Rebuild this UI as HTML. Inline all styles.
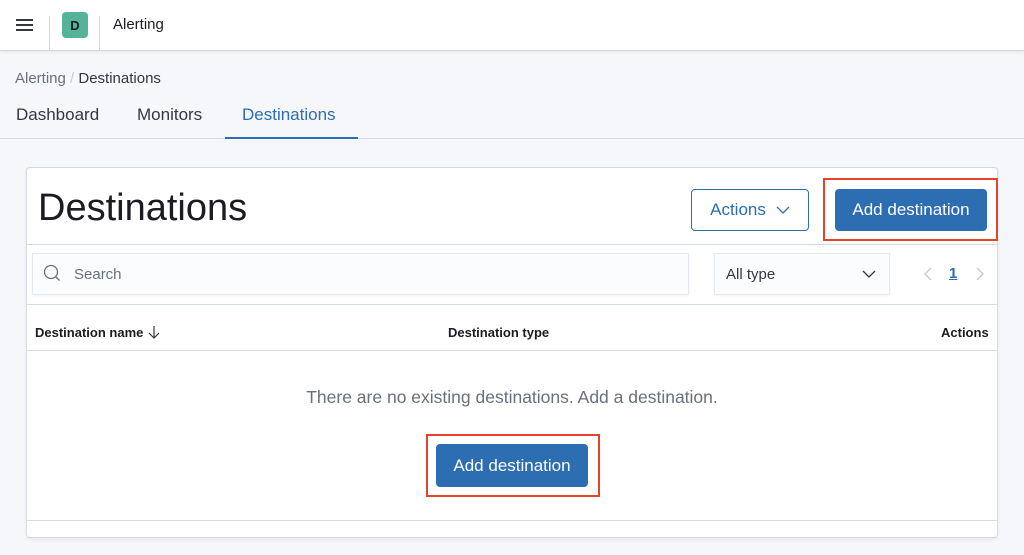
<!DOCTYPE html>
<html><head><meta charset="utf-8"><style>
*{box-sizing:border-box;margin:0;padding:0}
body{width:1024px;height:555px;background:#f5f7fa;font-family:"Liberation Sans",Arial,sans-serif;color:#343741;position:relative;overflow:hidden}
.a{position:absolute}
.btn{background:#2d6db2;color:#fff;border-radius:4px;font-size:17px;display:flex;align-items:center;justify-content:center}
.red{border:2px solid #e5432c}
</style></head><body>
<div class="a" style="left:0;top:0;width:1024px;height:51px;background:#fff;border-bottom:1px solid #d3dae6;box-shadow:0 1px 3px rgba(0,0,0,.08)"></div>
<div class="a" style="left:16px;top:19px;width:17px;height:2px;background:#343741;box-shadow:0 5px 0 #343741,0 10px 0 #343741"></div>
<div class="a" style="left:49px;top:16px;width:1px;height:35px;background:#d3dae6"></div>
<div class="a" style="left:62px;top:12px;width:26px;height:26px;background:#54b399;border-radius:4px;font-size:13px;font-weight:bold;color:#1a1c21;display:flex;align-items:center;justify-content:center">D</div>
<div class="a" style="left:99px;top:16px;width:1px;height:35px;background:#d3dae6"></div>
<div class="a" style="left:113px;top:16px;font-size:15px;color:#1a1c21">Alerting</div>
<div class="a" style="left:15px;top:70px;font-size:15px;color:#69707d">Alerting <span style="color:#c5cad3">/</span> <span style="color:#343741">Destinations</span></div>
<div class="a" style="left:16px;top:105px;font-size:17px">Dashboard</div>
<div class="a" style="left:137px;top:105px;font-size:17px">Monitors</div>
<div class="a" style="left:242px;top:105px;font-size:17px;color:#2d6db2">Destinations</div>
<div class="a" style="left:0;top:138px;width:1024px;height:1px;background:#d3dae6"></div>
<div class="a" style="left:225px;top:137px;width:133px;height:2px;background:#2d6db2"></div>
<div class="a" style="left:26px;top:167px;width:972px;height:371px;background:#fff;border:1px solid #d3dae6;border-radius:4px;box-shadow:0 2px 3px rgba(0,0,0,.06)"></div>
<div class="a" style="left:38px;top:187px;font-size:38px;color:#1a1c21">Destinations</div>
<div class="a" style="left:691px;top:189px;width:118px;height:42px;border:1px solid #2d6db2;border-radius:4px;color:#2d6db2;font-size:17px;display:flex;align-items:center;justify-content:center">Actions <svg width="14" height="8" style="margin-left:10px" viewBox="0 0 14 8"><path d="M1 1l6 6 6-6" stroke="#2d6db2" stroke-width="1.3" fill="none"/></svg></div>
<div class="a red" style="left:823px;top:178px;width:175px;height:63px"></div>
<div class="a btn" style="left:835px;top:189px;width:152px;height:42px">Add destination</div>
<div class="a" style="left:27px;top:244px;width:970px;height:1px;background:#d3dae6"></div>
<div class="a" style="left:32px;top:253px;width:657px;height:42px;background:#fbfcfd;border:1px solid #e4e8ef;box-shadow:0 1px 2px rgba(0,0,0,.05)"></div>
<svg class="a" style="left:43px;top:264px" width="18" height="18" viewBox="0 0 18 18"><circle cx="8" cy="8" r="6.5" stroke="#69707d" stroke-width="1.3" fill="none"/><path d="M12.5 12.5l4 4" stroke="#69707d" stroke-width="1.3"/></svg>
<div class="a" style="left:74px;top:266px;font-size:15px;color:#69707d">Search</div>
<div class="a" style="left:714px;top:253px;width:176px;height:42px;background:#fbfcfd;border:1px solid #e4e8ef;box-shadow:0 1px 2px rgba(0,0,0,.05)"></div>
<div class="a" style="left:726px;top:266px;font-size:15px">All type</div>
<svg class="a" style="left:862px;top:270px" width="14" height="8" viewBox="0 0 14 8"><path d="M1 1l6 6 6-6" stroke="#343741" stroke-width="1.3" fill="none"/></svg>
<svg class="a" style="left:924px;top:267px" width="8" height="14" viewBox="0 0 8 14"><path d="M7 1L1 7l6 6" stroke="#c5cad3" stroke-width="1.3" fill="none"/></svg>
<div class="a" style="left:949px;top:265px;font-size:15px;font-weight:bold;color:#2d6db2;text-decoration:underline">1</div>
<svg class="a" style="left:976px;top:267px" width="8" height="14" viewBox="0 0 8 14"><path d="M1 1l6 6-6 6" stroke="#c5cad3" stroke-width="1.3" fill="none"/></svg>
<div class="a" style="left:27px;top:304px;width:970px;height:1px;background:#d3dae6"></div>
<div class="a" style="left:35px;top:325px;font-size:13px;font-weight:bold;color:#1a1c21">Destination name</div>
<svg class="a" style="left:148px;top:325px" width="12" height="14" viewBox="0 0 12 14"><path d="M6 1v12M1 8l5 5 5-5" stroke="#343741" stroke-width="1.2" fill="none"/></svg>
<div class="a" style="left:448px;top:325px;font-size:13px;font-weight:bold;color:#1a1c21">Destination type</div>
<div class="a" style="left:941px;top:325px;font-size:13px;font-weight:bold;color:#1a1c21">Actions</div>
<div class="a" style="left:27px;top:350px;width:970px;height:1px;background:#d3dae6"></div>
<div class="a" style="left:0;top:387px;width:1024px;text-align:center;font-size:17.5px;color:#69707d">There are no existing destinations. Add a destination.</div>
<div class="a red" style="left:426px;top:434px;width:174px;height:63px"></div>
<div class="a btn" style="left:436px;top:444px;width:152px;height:43px">Add destination</div>
<div class="a" style="left:27px;top:520px;width:970px;height:1px;background:#d3dae6"></div>
</body></html>
